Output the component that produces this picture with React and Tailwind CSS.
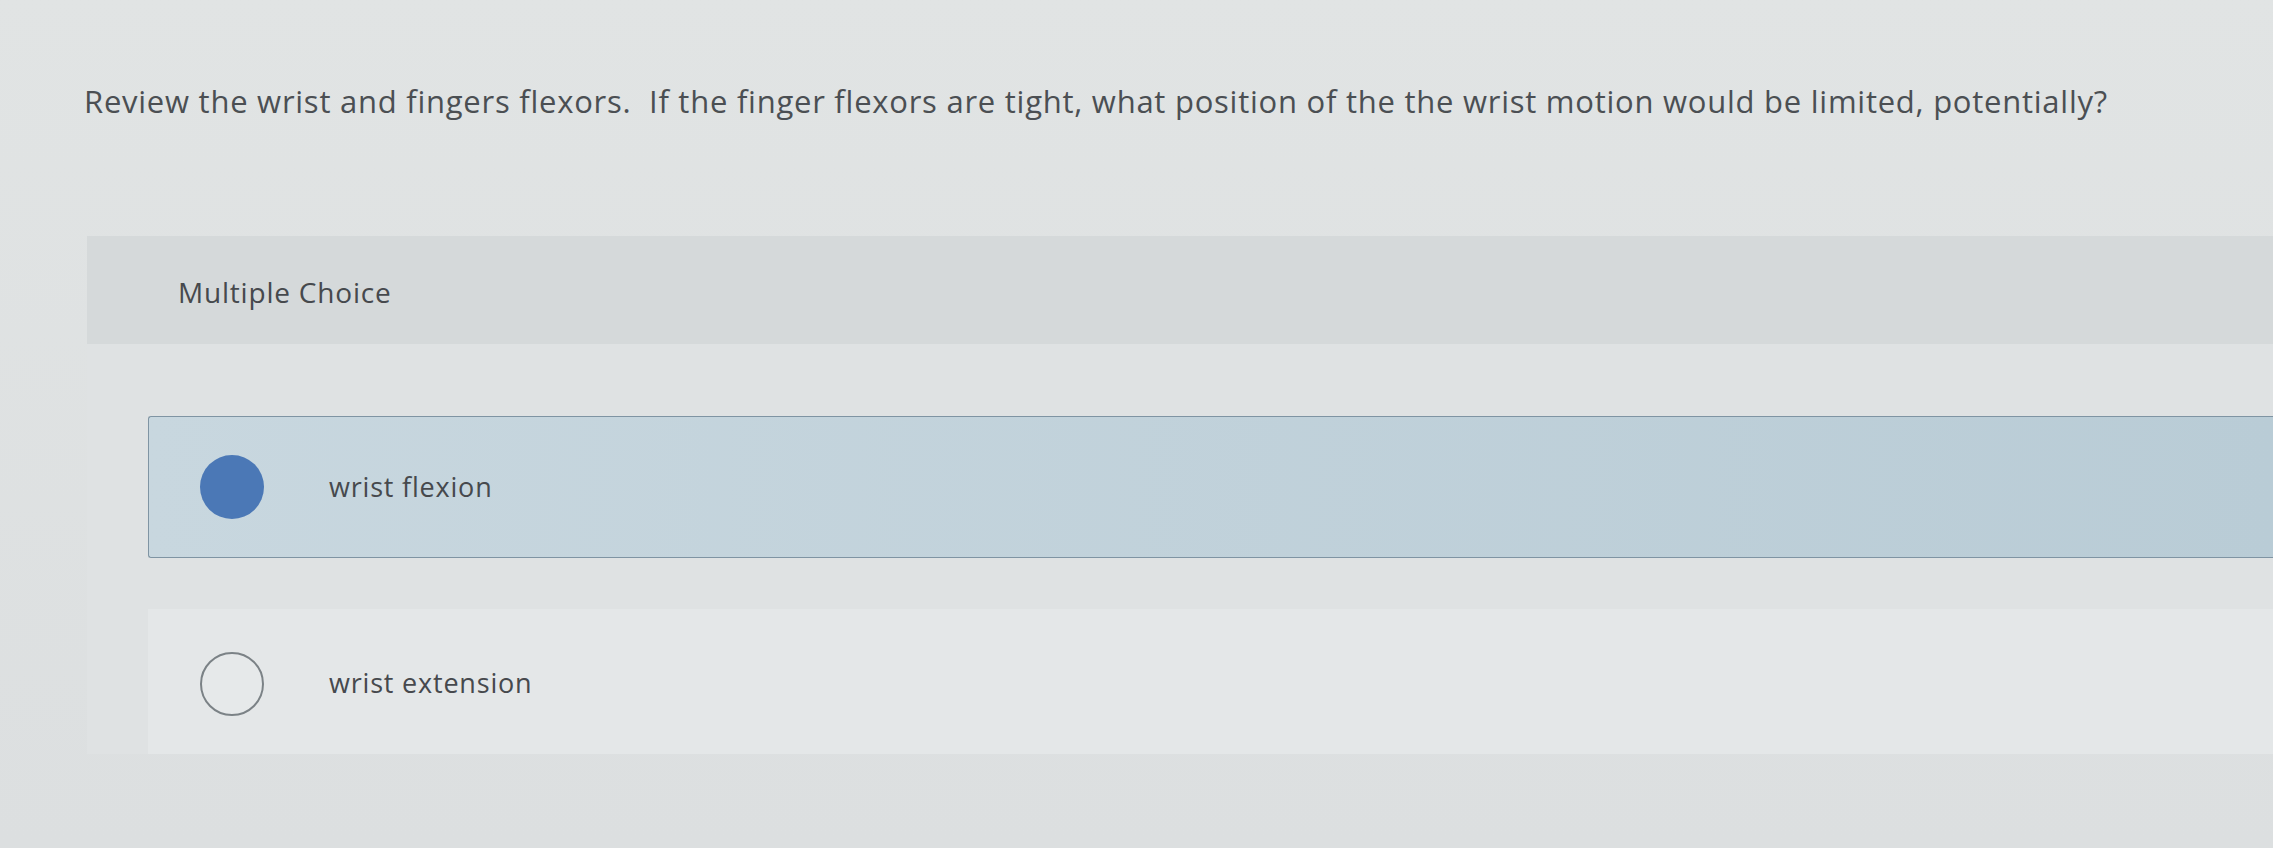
export default function App() {
  const font = {
    fontFamily: '"Open Sans", Lato, "Liberation Sans", sans-serif',
    fontVariantLigatures: 'none',
  };
  return (
    <div
      className="h-[848px] w-full overflow-hidden bg-gradient-to-b from-[#e1e4e4] to-[#dcdfe0] text-[#4f5357]"
      style={font}
    >
      <div className="pt-[83px] pl-[84px]">
        <p className="text-[31px] leading-[36px] tracking-[0.75px] font-medium text-[#4b4f53] whitespace-nowrap">
          Review the wrist and fingers flexors.&nbsp; If the finger flexors are tight, what position of the the wrist motion would be limited, potentially?
        </p>
      </div>

      <div className="ml-[87px] mt-[117px] bg-[#dfe2e3]">
        <div className="h-[108px] bg-[#d5d9da] flex items-center pl-[91px] pt-[4px]">
          <span className="text-[28px] tracking-[0.8px] font-medium text-[#46494d]">Multiple Choice</span>
        </div>

        <div className="pl-[61px] pt-[72px] flex flex-col gap-[51px]">
          {/* selected answer */}
          <div className="h-[142px] flex items-center rounded-l-[3px] border border-r-0 border-[#7f94a3] bg-gradient-to-r from-[#c8d7df] to-[#b9ccd6] pl-[51px]">
            <span className="block h-[64px] w-[64px] rounded-full bg-[#4b78b6]" />
            <span className="ml-[65px] text-[27px] tracking-[0.8px] font-medium text-[#46494d]">wrist flexion</span>
          </div>

          {/* unselected answer */}
          <div className="h-[145px] flex items-center bg-[#e4e7e8] pl-[52px] pt-[4px]">
            <span className="block h-[64px] w-[64px] rounded-full border-[2px] border-[#7b8286] bg-[#e6e9ea]" />
            <span className="ml-[65px] text-[27px] tracking-[0.8px] font-medium text-[#46494d]">wrist extension</span>
          </div>
        </div>
      </div>
    </div>
  );
}
